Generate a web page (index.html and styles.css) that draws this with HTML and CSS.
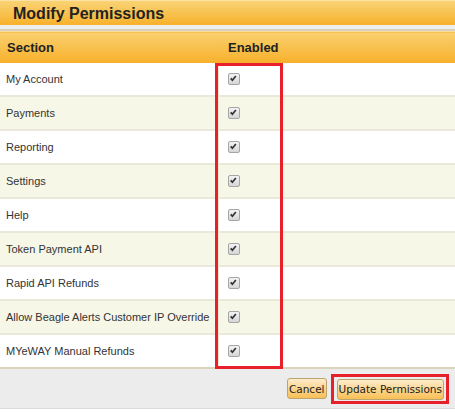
FILE: index.html
```html
<!DOCTYPE html>
<html>
<head>
<meta charset="utf-8">
<link rel="stylesheet" href="styles.css">
</head>
<body>
<div class="dialog">
  <div class="titlebar">Modify Permissions</div>
  <div class="gap"></div>
  <div class="table-wrap">
    <table class="perms">
      <thead>
        <tr><th class="col-section">Section</th><th class="col-enabled">Enabled</th></tr>
      </thead>
      <tbody>
        <tr><td class="name">My Account</td><td class="chk"><span class="cb"><svg viewBox="0 0 12 12"><path d="M3 6.2 L5.1 8.4 L9.2 3.4"/></svg></span></td></tr>
        <tr class="alt"><td class="name">Payments</td><td class="chk"><span class="cb"><svg viewBox="0 0 12 12"><path d="M3 6.2 L5.1 8.4 L9.2 3.4"/></svg></span></td></tr>
        <tr><td class="name">Reporting</td><td class="chk"><span class="cb"><svg viewBox="0 0 12 12"><path d="M3 6.2 L5.1 8.4 L9.2 3.4"/></svg></span></td></tr>
        <tr class="alt"><td class="name">Settings</td><td class="chk"><span class="cb"><svg viewBox="0 0 12 12"><path d="M3 6.2 L5.1 8.4 L9.2 3.4"/></svg></span></td></tr>
        <tr><td class="name">Help</td><td class="chk"><span class="cb"><svg viewBox="0 0 12 12"><path d="M3 6.2 L5.1 8.4 L9.2 3.4"/></svg></span></td></tr>
        <tr class="alt"><td class="name">Token Payment API</td><td class="chk"><span class="cb"><svg viewBox="0 0 12 12"><path d="M3 6.2 L5.1 8.4 L9.2 3.4"/></svg></span></td></tr>
        <tr><td class="name">Rapid API Refunds</td><td class="chk"><span class="cb"><svg viewBox="0 0 12 12"><path d="M3 6.2 L5.1 8.4 L9.2 3.4"/></svg></span></td></tr>
        <tr class="alt"><td class="name">Allow Beagle Alerts Customer IP Override</td><td class="chk"><span class="cb"><svg viewBox="0 0 12 12"><path d="M3 6.2 L5.1 8.4 L9.2 3.4"/></svg></span></td></tr>
        <tr><td class="name">MYeWAY Manual Refunds</td><td class="chk"><span class="cb"><svg viewBox="0 0 12 12"><path d="M3 6.2 L5.1 8.4 L9.2 3.4"/></svg></span></td></tr>
      </tbody>
    </table>
    <div class="highlight-col"></div>
  </div>
  <div class="footer">
    <button class="btn">Cancel</button>
    <span class="highlight-btn"><button class="btn">Update Permissions</button></span>
  </div>
</div>
</body>
</html>
```
FILE: styles.css
```css
html, body {
  margin: 0;
  padding: 0;
  background: #ffffff;
}
.dialog {
  width: 455px;
  background: #ededed;
  font-family: "Liberation Sans", Arial, sans-serif;
}
.titlebar {
  height: 25px;
  box-sizing: border-box;
  padding-left: 13px;
  font-size: 16px;
  font-weight: bold;
  line-height: 25px;
  color: #222;
  background: linear-gradient(#f9d375, #f7b12b);
  border-top: 1px solid #fbe1a4;
}
.gap {
  height: 4px;
  background: #eeeeee;
  border-bottom: 2px solid #d5d1ba;
}
.table-wrap {
  position: relative;
}
.perms {
  width: 455px;
  border-collapse: collapse;
  border-spacing: 0;
  background: #ffffff;
}
.perms th {
  height: 31px;
  padding: 0;
  text-align: left;
  font-size: 13px;
  font-weight: bold;
  color: #222;
  background: linear-gradient(#f9d06f, #f7b02a);
  border-top: 1px solid #fbdd97;
}
.perms th.col-section {
  width: 211px;
  padding-left: 7px;
}
.perms th.col-enabled {
  padding-left: 10px;
}
.perms td {
  height: 32px;
  padding: 0;
  border-bottom: 2px solid #ebe9d9;
  font-size: 11px;
  color: #333;
}
.perms tr.alt td {
  background: #f7f7e7;
}
.perms td.name {
  padding-left: 6px;
}
.perms td.chk {
  padding-left: 9px;
  border-left: 1px solid #ebe8d6;
}
.cb {
  display: block;
  width: 10px;
  height: 10px;
  border: 1px solid #a6a6a6;
  border-radius: 2px;
  background: linear-gradient(#f3f3f3, #d6d6d6);
}
.cb svg {
  display: block;
  width: 10px;
  height: 10px;
}
.cb path {
  fill: none;
  stroke: #333;
  stroke-width: 2;
  transform: translate(-1px, -1px);
}
.perms tbody tr:last-child td {
  border-bottom-color: #d9d5bd;
}
.highlight-col {
  position: absolute;
  left: 215px;
  top: 32px;
  width: 62px;
  height: 300px;
  border: 3px solid #e8202a;
}
.footer {
  height: 39px;
  display: flex;
  justify-content: flex-end;
  align-items: center;
  gap: 4px;
  padding-right: 6px;
  background: #ececec;
  border-bottom: 1px solid #dcdcdc;
}
.btn {
  height: 21px;
  margin: 0;
  padding: 0 1px;
  font-family: "DejaVu Sans", Verdana, sans-serif;
  font-size: 10.5px;
  color: #222;
  border: 1px solid #b9a56f;
  border-radius: 3px;
  background: linear-gradient(#fdeccb, #f9bf55);
}
.highlight-btn {
  display: flex;
  padding: 2px 2px 1px 3px;
  border: 3px solid #e8202a;
}
```
